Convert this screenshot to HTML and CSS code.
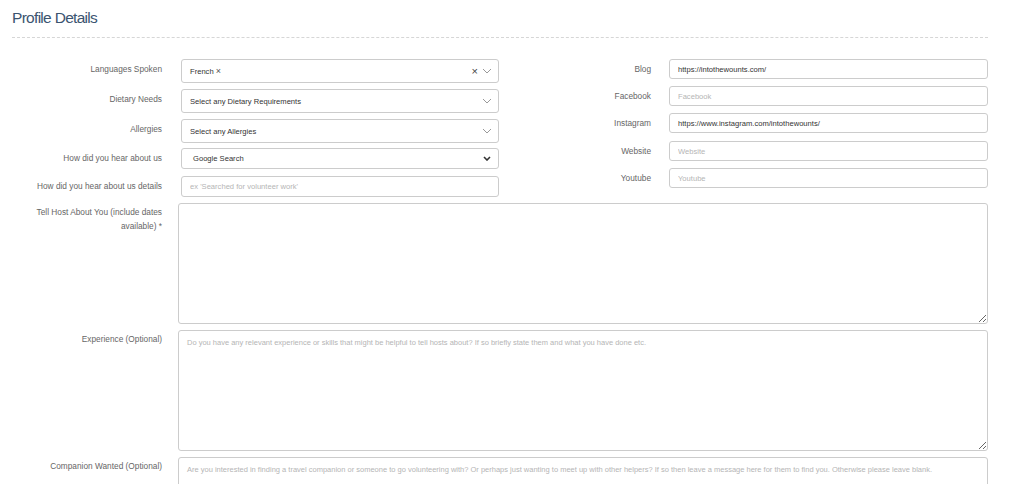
FILE: index.html
```html
<!DOCTYPE html>
<html lang="en">
<head>
<meta charset="UTF-8">
<meta name="viewport" content="width=device-width, initial-scale=1.0">
<title>Profile Details</title>
<link rel="stylesheet" href="styles.css">
</head>
<body>
<div class="page">
  <h2 class="title">Profile Details</h2>
  <div class="divider"></div>

  <div class="top">
    <!-- Left column -->
    <div class="col left">
      <div class="row tall">
        <label class="label">Languages Spoken</label>
        <div class="multi">
          <span class="value">French <span class="tag-x">&#215;</span></span>
          <span class="clear">&#215;</span>
          <svg class="chev" width="10" height="6" viewBox="0 0 10 6"><path d="M1 1l4 4 4-4" fill="none" stroke="#999" stroke-width="1"/></svg>
        </div>
      </div>
      <div class="row tall">
        <label class="label">Dietary Needs</label>
        <div class="multi">
          <span class="value">Select any Dietary Requirements</span>
          <svg class="chev" width="10" height="6" viewBox="0 0 10 6"><path d="M1 1l4 4 4-4" fill="none" stroke="#999" stroke-width="1"/></svg>
        </div>
      </div>
      <div class="row tall third">
        <label class="label">Allergies</label>
        <div class="multi">
          <span class="value">Select any Allergies</span>
          <svg class="chev" width="10" height="6" viewBox="0 0 10 6"><path d="M1 1l4 4 4-4" fill="none" stroke="#999" stroke-width="1"/></svg>
        </div>
      </div>
      <div class="row mid">
        <label class="label">How did you hear about us</label>
        <div class="select">
          <span class="value">Google Search</span>
          <svg class="chev" width="8" height="5" viewBox="0 0 8 5"><path d="M1 1l3 3 3-3" fill="none" stroke="#333" stroke-width="1.6"/></svg>
        </div>
      </div>
      <div class="row mid last">
        <label class="label">How did you hear about us details</label>
        <input class="field" type="text" placeholder="ex 'Searched for volunteer work'">
      </div>
    </div>

    <!-- Right column -->
    <div class="col right">
      <div class="row short">
        <label class="label">Blog</label>
        <input class="field" type="text" value="https://intothewounts.com/">
      </div>
      <div class="row short">
        <label class="label">Facebook</label>
        <input class="field" type="text" placeholder="Facebook">
      </div>
      <div class="row short">
        <label class="label">Instagram</label>
        <input class="field" type="text" value="https://www.instagram.com/intothewounts/">
      </div>
      <div class="row short">
        <label class="label">Website</label>
        <input class="field" type="text" placeholder="Website">
      </div>
      <div class="row short">
        <label class="label">Youtube</label>
        <input class="field" type="text" placeholder="Youtube">
      </div>
    </div>
  </div>

  <div class="area-row">
    <label class="label">Tell Host About You (include dates available) *</label>
    <textarea class="area"></textarea>
  </div>
  <div class="area-row">
    <label class="label">Experience (Optional)</label>
    <textarea class="area" placeholder="Do you have any relevant experience or skills that might be helpful to tell hosts about? If so briefly state them and what you have done etc."></textarea>
  </div>
  <div class="area-row">
    <label class="label">Companion Wanted (Optional)</label>
    <textarea class="area" placeholder="Are you interested in finding a travel companion or someone to go volunteering with? Or perhaps just wanting to meet up with other helpers? If so then leave a message here for them to find you. Otherwise please leave blank."></textarea>
  </div>
</div>
</body>
</html>
```
FILE: styles.css
```css
body {
  margin: 0;
  font-family: "Liberation Sans", Arial, sans-serif;
  background-color: #ffffff;
  color: #333333;
}
.page {
  padding: 0 36px 0 12px;
}
.title {
  margin: 0;
  padding-top: 8px;
  font-size: 15.5px;
  letter-spacing: -0.7px;
  font-weight: normal;
  color: #3b5470;
  line-height: 20px;
}
.divider {
  border-top: 1px dashed #d6d6d6;
  margin-top: 9px;
  margin-bottom: 21px;
}
.top {
  display: flex;
  gap: 2px;
}
.col { width: 487px; }
.row {
  display: flex;
  gap: 19px;
}
.right .row { gap: 18px; }
.label {
  width: 150px;
  flex-shrink: 0;
  text-align: right;
  font-size: 8.3px;
  line-height: 14px;
  color: #666666;
}
.row.tall { height: 24px; margin-bottom: 6px; }
.row.tall .label { padding-top: 3px; }
.row.tall.third { margin-bottom: 5px; }
.row.mid { height: 21px; margin-bottom: 7px; }
.row.mid.last { margin-bottom: 6px; }
.row.mid .label { padding-top: 3px; }
.row.short { height: 20px; margin-bottom: 7px; }
.row.short .label { padding-top: 3px; }
.row.short:nth-child(3) { margin-bottom: 8px; }
.multi, .select, .field {
  flex: 1;
  box-sizing: border-box;
  border: 1px solid #cccccc;
  border-radius: 3px;
  background: #ffffff;
  font-family: "Liberation Sans", Arial, sans-serif;
  font-size: 7.6px;
  color: #333333;
}
.multi, .select {
  display: flex;
  align-items: center;
  padding: 0 6px 0 8px;
}
.select { padding-left: 11px; padding-right: 7px; }
.value { flex: 1; white-space: nowrap; }
.tag-x { color: #555555; font-size: 9px; }
.clear {
  color: #444444;
  font-size: 11px;
  margin-right: 4px;
}
.chev { display: block; }
.field {
  padding: 0 8px;
  outline: none;
}
.field::placeholder, .area::placeholder { color: #b5b5b5; }
.area-row {
  display: flex;
  gap: 16px;
  margin-bottom: 6px;
}
.area-row .label { padding-top: 2px; }
.area {
  flex: 1;
  height: 121px;
  box-sizing: border-box;
  border: 1px solid #cccccc;
  border-radius: 3px;
  padding: 5px 8px;
  font-family: "Liberation Sans", Arial, sans-serif;
  font-size: 7.5px;
  line-height: 13px;
  color: #333333;
  outline: none;
  margin: 0;
}
```
